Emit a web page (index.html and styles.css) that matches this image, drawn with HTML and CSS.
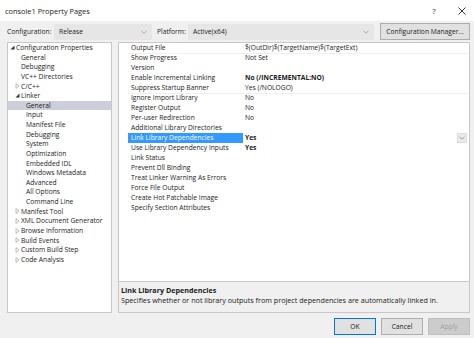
FILE: index.html
```html
<!DOCTYPE html>
<html>
<head>
    <meta charset='utf-8'>
    <title>console1 Property Pages</title>
    <link rel="stylesheet" href="styles.css">
</head>
<body>
<div class="dialog">
    <div class="titlebar">
        <span class="title">console1 Property Pages</span>
        <span class="caption-btn help">?</span>
        <span class="caption-btn close">
            <svg width="8" height="8" viewBox="0 0 8 8"><path d="M0.5 0.5L7.5 7.5M7.5 0.5L0.5 7.5" stroke="#222" stroke-width="0.9"/></svg>
        </span>
    </div>

    <div class="toolbar">
        <span class="lbl">Configuration:</span>
        <div class="combo combo-config"><span>Release</span><svg class="chev" width="6" height="4" viewBox="0 0 6 4"><path d="M0.5 0.8L3 3.2L5.5 0.8" fill="none" stroke="#999" stroke-width="0.8"/></svg></div>
        <span class="lbl lbl-platform">Platform:</span>
        <div class="combo combo-platform"><span>Active(x64)</span><svg class="chev" width="6" height="4" viewBox="0 0 6 4"><path d="M0.5 0.8L3 3.2L5.5 0.8" fill="none" stroke="#999" stroke-width="0.8"/></svg></div>
        <button class="btn btn-manager">Configuration Manager...</button>
    </div>

    <div class="main">
        <div class="tree">
            <div class="node lvl0"><svg class="tri" width="5" height="5" viewBox="0 0 5 5"><path d="M4.5 0.5V4.5H0.5Z" fill="#333"/></svg>Configuration Properties</div>
            <div class="node lvl1">General</div>
            <div class="node lvl1">Debugging</div>
            <div class="node lvl1">VC++ Directories</div>
            <div class="node lvl1b"><svg class="tri" width="5" height="6" viewBox="0 0 5 6"><path d="M1 0.6L4 3L1 5.4Z" fill="none" stroke="#a0a0a0" stroke-width="0.7"/></svg>C/C++</div>
            <div class="node lvl1b"><svg class="tri" width="5" height="5" viewBox="0 0 5 5"><path d="M4.5 0.5V4.5H0.5Z" fill="#333"/></svg>Linker</div>
            <div class="node lvl2 selected">General</div>
            <div class="node lvl2">Input</div>
            <div class="node lvl2">Manifest File</div>
            <div class="node lvl2">Debugging</div>
            <div class="node lvl2">System</div>
            <div class="node lvl2">Optimization</div>
            <div class="node lvl2">Embedded IDL</div>
            <div class="node lvl2">Windows Metadata</div>
            <div class="node lvl2">Advanced</div>
            <div class="node lvl2">All Options</div>
            <div class="node lvl2">Command Line</div>
            <div class="node lvl1b"><svg class="tri" width="5" height="6" viewBox="0 0 5 6"><path d="M1 0.6L4 3L1 5.4Z" fill="none" stroke="#a0a0a0" stroke-width="0.7"/></svg>Manifest Tool</div>
            <div class="node lvl1b"><svg class="tri" width="5" height="6" viewBox="0 0 5 6"><path d="M1 0.6L4 3L1 5.4Z" fill="none" stroke="#a0a0a0" stroke-width="0.7"/></svg>XML Document Generator</div>
            <div class="node lvl1b"><svg class="tri" width="5" height="6" viewBox="0 0 5 6"><path d="M1 0.6L4 3L1 5.4Z" fill="none" stroke="#a0a0a0" stroke-width="0.7"/></svg>Browse Information</div>
            <div class="node lvl1b"><svg class="tri" width="5" height="6" viewBox="0 0 5 6"><path d="M1 0.6L4 3L1 5.4Z" fill="none" stroke="#a0a0a0" stroke-width="0.7"/></svg>Build Events</div>
            <div class="node lvl1b"><svg class="tri" width="5" height="6" viewBox="0 0 5 6"><path d="M1 0.6L4 3L1 5.4Z" fill="none" stroke="#a0a0a0" stroke-width="0.7"/></svg>Custom Build Step</div>
            <div class="node lvl1b"><svg class="tri" width="5" height="6" viewBox="0 0 5 6"><path d="M1 0.6L4 3L1 5.4Z" fill="none" stroke="#a0a0a0" stroke-width="0.7"/></svg>Code Analysis</div>
        </div>

        <div class="right">
            <div class="grid">
                <div class="row line-below"><span class="name">Output File</span><span class="value">$(OutDir)$(TargetName)$(TargetExt)</span></div>
                <div class="row"><span class="name">Show Progress</span><span class="value">Not Set</span></div>
                <div class="row"><span class="name">Version</span><span class="value"></span></div>
                <div class="row"><span class="name">Enable Incremental Linking</span><span class="value bold">No (/INCREMENTAL:NO)</span></div>
                <div class="row line-below"><span class="name">Suppress Startup Banner</span><span class="value">Yes (/NOLOGO)</span></div>
                <div class="row"><span class="name">Ignore Import Library</span><span class="value">No</span></div>
                <div class="row"><span class="name">Register Output</span><span class="value">No</span></div>
                <div class="row"><span class="name">Per-user Redirection</span><span class="value">No</span></div>
                <div class="row"><span class="name">Additional Library Directories</span><span class="value"></span></div>
                <div class="row selected"><span class="name">Link Library Dependencies</span><span class="value bold">Yes</span>
                    <span class="drop"><svg width="6" height="4" viewBox="0 0 6 4"><path d="M0.5 0.8L3 3.2L5.5 0.8" fill="none" stroke="#888" stroke-width="0.8"/></svg></span>
                </div>
                <div class="row"><span class="name">Use Library Dependency Inputs</span><span class="value bold">Yes</span></div>
                <div class="row"><span class="name">Link Status</span><span class="value"></span></div>
                <div class="row"><span class="name">Prevent Dll Binding</span><span class="value"></span></div>
                <div class="row"><span class="name">Treat Linker Warning As Errors</span><span class="value"></span></div>
                <div class="row"><span class="name">Force File Output</span><span class="value"></span></div>
                <div class="row"><span class="name">Create Hot Patchable Image</span><span class="value"></span></div>
                <div class="row"><span class="name">Specify Section Attributes</span><span class="value"></span></div>
            </div>
            <div class="desc">
                <div class="desc-title">Link Library Dependencies</div>
                <div class="desc-text">Specifies whether or not library outputs from project dependencies are automatically linked in.</div>
            </div>
        </div>
    </div>

    <div class="buttons">
        <button class="btn btn-ok">OK</button>
        <button class="btn">Cancel</button>
        <button class="btn btn-disabled">Apply</button>
    </div>
</div>
</body>
</html>
```

FILE: styles.css
```css
* {
    box-sizing: border-box;
}
body {
    margin: 0;
    font-family: "Open Sans", "Noto Sans", sans-serif;
    font-size: 6.7px;
    color: #1a1a1a;
    background: #ffffff;
}
.dialog {
    width: 474px;
    height: 338px;
    background: #f0f0f0;
}

/* title bar */
.titlebar {
    height: 21px;
    background: #ffffff;
    display: flex;
    align-items: center;
    padding-left: 5px;
}
.title {
    flex: 1;
    font-size: 7.4px;
    color: #222;
}
.caption-btn {
    text-align: center;
    font-size: 8px;
    color: #333;
    display: flex;
    justify-content: center;
}
.help {
    width: 34px;
}
.close {
    width: 22px;
    margin-right: 1px;
}

/* toolbar */
.toolbar {
    height: 21px;
    display: flex;
    align-items: center;
    padding-left: 7px;
}
.lbl {
    width: 47px;
}
.lbl-platform {
    width: 31px;
    margin-left: 5px;
}
.combo {
    height: 16px;
    background: #e6e6e6;
    display: flex;
    align-items: center;
    justify-content: space-between;
    padding: 0 5px;
    color: #222;
}
.combo-config {
    width: 98px;
}
.combo-platform {
    width: 186px;
}
.btn {
    font-family: inherit;
    font-size: 6.7px;
    color: #1a1a1a;
    background: #e1e1e1;
    border: 1px solid #adadad;
    height: 17px;
    padding: 0;
}
.btn-manager {
    width: 90px;
    margin-left: 6px;
}

/* main area */
.main {
    height: 271px;
    display: flex;
    padding-left: 7px;
}
.tree {
    width: 105px;
    background: #ffffff;
    border: 1px solid #c8c8c8;
}
.node {
    height: 9.64px;
    line-height: 9.64px;
    white-space: nowrap;
    display: flex;
    align-items: center;
}
.tri {
    margin-right: 1px;
}
.lvl0 {
    padding-left: 2px;
}
.lvl1 {
    padding-left: 13px;
}
.lvl1b {
    padding-left: 7px;
}
.lvl2 {
    padding-left: 18px;
}
.node.selected {
    background: #cccedb;
}

.right {
    width: 352px;
    margin-left: 6px;
    display: flex;
    flex-direction: column;
}
.grid {
    height: 240px;
    background: #ffffff;
    border: 1px solid #c8c8c8;
    padding: 0 0 0 9px;
}
.row {
    height: 10px;
    line-height: 10px;
    display: flex;
    white-space: nowrap;
}
.row.line-below {
    box-shadow: 0 1px 0 #f0f0f0;
}
.row .name {
    width: 115px;
    padding-left: 3px;
}
.row .value {
    flex: 1;
    padding-left: 2px;
}
.bold {
    font-weight: bold;
}
.row.selected .name {
    background: #3399ff;
    color: #ffffff;
}
.drop {
    width: 10px;
    height: 10px;
    background: #eaeaea;
    border: 1px solid #dcdcdc;
    display: flex;
    align-items: center;
    justify-content: center;
    margin-right: 2px;
}

.desc {
    height: 31px;
    background: #f0f0f0;
    border: 1px solid #c8c8c8;
    border-top: none;
    padding: 3px 2px;
    font-size: 7.2px;
}
.desc-title {
    font-weight: bold;
    line-height: 10px;
}
.desc-text {
    line-height: 10px;
}

/* bottom buttons */
.buttons {
    display: flex;
    justify-content: flex-end;
    gap: 5px;
    padding: 5px 4px 0 0;
}
.buttons .btn {
    width: 42px;
}
.btn-ok {
    border: 1px solid #0078d7;
}
.btn-disabled {
    background: #cccccc;
    border-color: #bfbfbf;
    color: #a0a0a0;
}
```
